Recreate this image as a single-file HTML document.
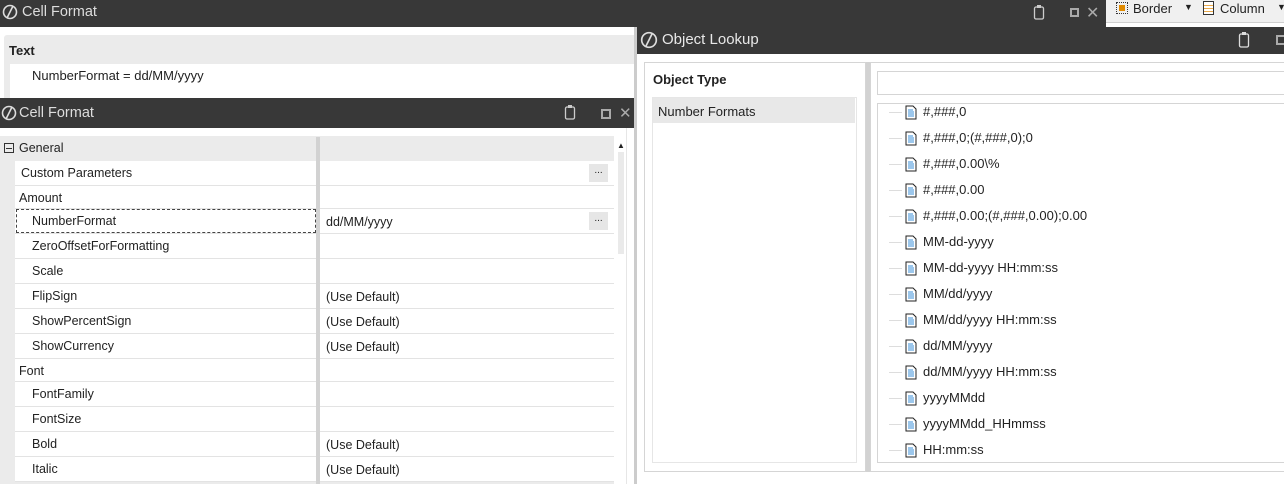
<!DOCTYPE html>
<html><head><meta charset="utf-8"><style>
*{margin:0;padding:0;box-sizing:border-box}
body{width:1284px;height:484px;overflow:hidden;background:#fff;font-family:"Liberation Sans",sans-serif;font-size:12.5px;color:#222;position:relative}
.a{position:absolute}
.dark{background:#383838;color:#e8e8e8}
.t{font-size:14.5px;white-space:nowrap}
.row{position:absolute;left:15px;width:599px;height:25px;background:#fff;border-bottom:1px solid #e3e3e3}
.row .k{position:absolute;left:17px;top:5px;white-space:nowrap}
.row .v{position:absolute;left:311px;top:6px;white-space:nowrap}
.grp .k{left:4px}
.dots{position:absolute;left:574px;top:3px;width:19px;height:18px;background:#e6e6e6;font-size:10px;text-align:center;line-height:14px}
.it{position:absolute;left:0;height:26px;white-space:nowrap;font-size:13px}
.it .ln{position:absolute;left:12px;top:11px;width:13px;border-top:1px solid #ddd}
.it .ic{position:absolute;left:28px;top:4px}
.it .tx{position:absolute;left:46px;top:3px}
</style></head><body>
<div class="a dark" style="left:0;top:0;width:1106px;height:27px"></div>
<svg class="a" style="left:2px;top:4px" width="16" height="16" viewBox="0 0 16 16"><circle cx="8" cy="8" r="6.5" fill="none" stroke="#ddd" stroke-width="1.6"/><path d="M11 2 L5 14" stroke="#ddd" stroke-width="1.6"/></svg>
<div class="a t" style="left:22px;top:4px;color:#ddd">Cell Format</div>
<svg class="a" style="left:1033px;top:4px" width="12" height="16"><rect x="1.5" y="3" width="9" height="12" rx="1.5" fill="none" stroke="#ccc" stroke-width="1.3"/><rect x="4" y="1" width="4" height="3" fill="#ccc"/></svg>
<div class="a" style="left:1070px;top:8px;width:9px;height:9px;border:2px solid #aaa"></div>
<div class="a" style="left:1086px;top:3px;color:#aaa;font-size:16px">✕</div>
<div class="a" style="left:1106px;top:0;width:178px;height:23px;background:#f0f0f0;border-bottom:1px solid #d0d0d0"></div>
<div class="a" style="left:1116px;top:2px;width:12px;height:12px;border:1px dotted #333"><div style="margin:2px;width:6px;height:6px;background:#e08a00"></div></div>
<div class="a" style="left:1133px;top:1px;font-size:13px;color:#222">Border</div>
<div class="a" style="left:1184px;top:2px;font-size:9px">▼</div>
<div class="a" style="left:1203px;top:1px;width:11px;height:14px;border:1px solid #333;background:linear-gradient(#fff 3px,#e9a94a 3px,#e9a94a 4px,#fff 4px,#fff 6px,#e9a94a 6px,#e9a94a 7px,#fff 7px,#fff 9px,#e9a94a 9px,#e9a94a 10px,#fff 10px)"></div>
<div class="a" style="left:1220px;top:1px;font-size:13px;color:#222">Column</div>
<div class="a" style="left:1277px;top:2px;font-size:9px">▼</div>
<div class="a" style="left:4px;top:35px;width:632px;height:63px;background:#ebebeb;border-radius:3px 0 0 0"></div>
<div class="a" style="left:9px;top:43px;font-weight:bold;font-size:13px">Text</div>
<div class="a" style="left:10px;top:64px;width:626px;height:34px;background:#fff"></div>
<div class="a" style="left:32px;top:68px;font-size:13px">NumberFormat = dd/MM/yyyy</div>
<div class="a dark" style="left:0;top:98px;width:634px;height:30px"></div>
<svg class="a" style="left:1px;top:105px" width="16" height="16" viewBox="0 0 16 16"><circle cx="8" cy="8" r="6.5" fill="none" stroke="#ddd" stroke-width="1.6"/><path d="M11 2 L5 14" stroke="#ddd" stroke-width="1.6"/></svg>
<div class="a t" style="left:19px;top:105px;color:#ddd">Cell Format</div>
<svg class="a" style="left:564px;top:104px" width="12" height="16"><rect x="1.5" y="3" width="9" height="12" rx="1.5" fill="none" stroke="#ccc" stroke-width="1.3"/><rect x="4" y="1" width="4" height="3" fill="#ccc"/></svg>
<div class="a" style="left:601px;top:109px;width:10px;height:10px;border:2px solid #aaa"></div>
<div class="a" style="left:619px;top:104px;color:#aaa;font-size:15px">✕</div>
<div class="a" style="left:0;top:128px;width:634px;height:356px;background:#fff"></div>
<div class="a" style="left:0;top:136px;width:614px;height:348px;background:#ebebeb"></div>
<div class="a" style="left:4px;top:143px;width:10px;height:10px;border:1px solid #333;font-size:0"><div style="margin:3.5px 1px;height:1px;background:#333"></div></div>
<div class="a" style="left:19px;top:141px">General</div>
<div class="row" style="top:161px"><div class="k" style="left:6px">Custom Parameters</div><div class="dots">...</div></div>
<div class="row grp" style="top:186px;height:23px"><div class="k">Amount</div></div>
<div class="row" style="top:209px"><div class="a" style="left:1px;top:0;width:300px;height:24px;border:1px dashed #444"></div><div class="k">NumberFormat</div><div class="v">dd/MM/yyyy</div><div class="dots">...</div></div>
<div class="row" style="top:234px"><div class="k">ZeroOffsetForFormatting</div></div>
<div class="row" style="top:259px"><div class="k">Scale</div></div>
<div class="row" style="top:284px"><div class="k">FlipSign</div><div class="v">(Use Default)</div></div>
<div class="row" style="top:309px"><div class="k">ShowPercentSign</div><div class="v">(Use Default)</div></div>
<div class="row" style="top:334px"><div class="k">ShowCurrency</div><div class="v">(Use Default)</div></div>
<div class="row grp" style="top:359px;height:23px"><div class="k">Font</div></div>
<div class="row" style="top:382px"><div class="k">FontFamily</div></div>
<div class="row" style="top:407px"><div class="k">FontSize</div></div>
<div class="row" style="top:432px"><div class="k">Bold</div><div class="v">(Use Default)</div></div>
<div class="row" style="top:457px"><div class="k">Italic</div><div class="v">(Use Default)</div></div>
<div class="a" style="left:316px;top:137px;width:4px;height:347px;background:#d2d2d2"></div>
<div class="a" style="left:615px;top:136px;width:12px;height:348px;background:#fff"></div>
<div class="a" style="left:617px;top:141px;font-size:8px">▲</div>
<div class="a" style="left:618px;top:152px;width:6px;height:102px;background:#eaeaea"></div>
<div class="a" style="left:626px;top:128px;width:1px;height:356px;background:#e6e6e6"></div>
<div class="a" style="left:634px;top:27px;width:3px;height:457px;background:#ccc"></div>
<div class="a dark" style="left:637px;top:27px;width:647px;height:27px"></div>
<svg class="a" style="left:640px;top:31px" width="18" height="18" viewBox="0 0 16 16"><circle cx="8" cy="8" r="6.5" fill="none" stroke="#ddd" stroke-width="1.5"/><path d="M11 2 L5 14" stroke="#ddd" stroke-width="1.5"/></svg>
<div class="a t" style="left:662px;top:31px;color:#e8e8e8;font-size:15px">Object Lookup</div>
<svg class="a" style="left:1238px;top:30px" width="12" height="18"><rect x="1.5" y="4" width="9" height="13" rx="1.5" fill="none" stroke="#ddd" stroke-width="1.3"/><rect x="4" y="2" width="4" height="3" fill="#ddd"/></svg>
<div class="a" style="left:1276px;top:35px;width:10px;height:10px;border:2px solid #aaa"></div>
<div class="a" style="left:644px;top:62px;width:222px;height:410px;border:1px solid #d5d5d5"></div>
<div class="a" style="left:652px;top:97px;width:205px;height:366px;border:1px solid #e6e6e6"></div>
<div class="a" style="left:653px;top:98px;width:202px;height:25px;background:#e8e8e8"></div>
<div class="a" style="left:653px;top:72px;font-weight:bold;font-size:13px">Object Type</div>
<div class="a" style="left:658px;top:104px;font-size:13px">Number Formats</div>
<div class="a" style="left:866px;top:62px;width:4px;height:410px;background:#d2d2d2"></div>
<div class="a" style="left:870px;top:62px;width:414px;height:410px;border-top:1px solid #d5d5d5;border-left:1px solid #d5d5d5;border-bottom:1px solid #d5d5d5"></div>
<div class="a" style="left:877px;top:71px;width:407px;height:24px;border:1px solid #d5d5d5;border-right:none"></div>
<div class="a" style="left:877px;top:103px;width:407px;height:360px;border:1px solid #d5d5d5;border-right:none"></div>
<div id="tree" class="a" style="left:877px;top:101px;width:400px;height:361px;overflow:hidden"></div>
<script>
var items=["#,###,0","#,###,0;(#,###,0);0","#,###,0.00\\%","#,###,0.00","#,###,0.00;(#,###,0.00);0.00","MM-dd-yyyy","MM-dd-yyyy HH:mm:ss","MM/dd/yyyy","MM/dd/yyyy HH:mm:ss","dd/MM/yyyy","dd/MM/yyyy HH:mm:ss","yyyyMMdd","yyyyMMdd_HHmmss","HH:mm:ss"];
var h="";items.forEach(function(t,i){h+='<div class="it" style="top:'+(i*26)+'px"><div class="ln"></div><svg class="ic" width="12" height="15"><path d="M1 1h7l3 3v10H1z" fill="#fff" stroke="#222"/><path d="M3 5h5M3 7h6M3 9h6M3 11h6" stroke="#3a8fd8"/></svg><div class="tx">'+t.replace(/&/g,"&amp;")+'</div></div>';});
document.getElementById("tree").innerHTML=h;
</script>
</body></html>
